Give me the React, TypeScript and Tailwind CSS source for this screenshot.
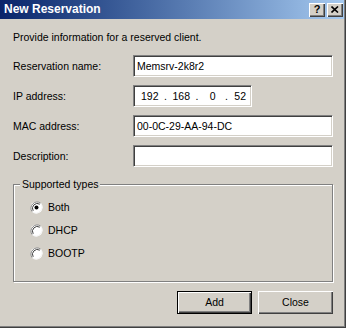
import React from "react";

const font = { fontFamily: '"Liberation Sans", Arial, sans-serif' };

function Sunken({ className = "", children }: { className?: string; children?: React.ReactNode }) {
  return (
    <div
      className={`h-[22px] bg-white border border-t-[#808080] border-l-[#808080] border-b-white border-r-white shadow-[inset_1px_1px_0_#404040,inset_-1px_-1px_0_#d4d0c8] flex items-center ${className}`}
    >
      {children}
    </div>
  );
}

function Radio({ label, checked }: { label: string; checked?: boolean }) {
  return (
    <div className="h-[23px] flex items-center gap-[5px] pl-[16px]">
      <svg width="13" height="13" viewBox="0 0 13 13">
        <circle cx="6.5" cy="6.5" r="6" fill="#fff" />
        <path d="M2.3 10.7 A6 6 0 0 1 10.7 2.3" stroke="#808080" strokeWidth="1" fill="none" />
        <path d="M3.2 9.8 A4.8 4.8 0 0 1 9.8 3.2" stroke="#404040" strokeWidth="1" fill="none" />
        <path d="M10.7 2.3 A6 6 0 0 1 2.3 10.7" stroke="#f4f4f4" strokeWidth="1" fill="none" />
        {checked && <circle cx="6.5" cy="6.5" r="2" fill="#000" />}
      </svg>
      <span>{label}</span>
    </div>
  );
}

function Button({ label, isDefault }: { label: string; isDefault?: boolean }) {
  return (
    <div
      className={`w-[75px] h-[23px] flex items-center justify-center bg-[#d4d0c8] ${
        isDefault
          ? "border border-black shadow-[inset_1px_1px_0_#fff,inset_-1px_-1px_0_#404040,inset_-2px_-2px_0_#808080]"
          : "shadow-[inset_1px_1px_0_#fff,inset_-1px_-1px_0_#404040,inset_-2px_-2px_0_#808080]"
      }`}
    >
      {label}
    </div>
  );
}

export default function App() {
  const labels = "w-[120px] shrink-0";
  return (
    <div
      className="w-[346px] h-[328px] bg-[#d4d0c8] text-black text-[10.5px] leading-[13px] border-r border-b border-[#404040] overflow-hidden"
      style={font}
    >
      <div className="h-full border-r border-b border-[#808080] flex flex-col">
        {/* Title bar */}
        <div className="h-[19px] shrink-0 flex items-center justify-between pl-[4px] pr-[1px] bg-gradient-to-r from-[#0a246a] to-[#a6caf0]">
          <span className="text-white font-bold text-[12px]">New Reservation</span>
          <div className="flex items-center gap-[2px]">
            <div className="w-[16px] h-[14px] bg-[#d4d0c8] flex items-center justify-center font-bold text-[11px] shadow-[inset_1px_1px_0_#fff,inset_-1px_-1px_0_#404040,inset_-2px_-2px_0_#808080]">
              ?
            </div>
            <div className="w-[16px] h-[14px] bg-[#d4d0c8] flex items-center justify-center shadow-[inset_1px_1px_0_#fff,inset_-1px_-1px_0_#404040,inset_-2px_-2px_0_#808080]">
              <svg width="8" height="7" viewBox="0 0 8 7">
                <path d="M0.5 0.5 L7 6.5 M7 0.5 L0.5 6.5" stroke="#000" strokeWidth="1.6" />
              </svg>
            </div>
          </div>
        </div>

        {/* Body */}
        <div className="flex-1 pl-[13px] pr-[11px] pt-[11px] border-t border-[#d4d0c8]">
          <p>Provide information for a reserved client.</p>

          <div className="mt-[11px] flex flex-col gap-[8px]">
            <div className="flex items-center">
              <span className={labels}>Reservation name:</span>
              <Sunken className="w-[200px] pl-[3px]">Memsrv-2k8r2</Sunken>
            </div>
            <div className="flex items-center">
              <span className={labels}>IP address:</span>
              <Sunken className="w-[119px] pl-[5px]">
                <span className="w-[22px] text-center">192</span>
                <span className="w-[10px] text-center">.</span>
                <span className="w-[22px] text-center">168</span>
                <span className="w-[10px] text-center">.</span>
                <span className="w-[22px] text-center">0</span>
                <span className="w-[6px] text-center">.</span>
                <span className="w-[22px] text-center">52</span>
              </Sunken>
            </div>
            <div className="flex items-center">
              <span className={labels}>MAC address:</span>
              <Sunken className="w-[200px] pl-[3px]">00-0C-29-AA-94-DC</Sunken>
            </div>
            <div className="flex items-center">
              <span className={labels}>Description:</span>
              <Sunken className="w-[200px]" />
            </div>
          </div>

          <fieldset className="mt-[11px] w-[320px] border border-[#808080] shadow-[inset_1px_1px_0_#fff,1px_1px_0_#fff] pt-[5px] pb-[16px]">
            <legend className="ml-[6px] px-[2px] bg-[#d4d0c8]">Supported types</legend>
            <Radio label="Both" checked />
            <Radio label="DHCP" />
            <Radio label="BOOTP" />
          </fieldset>

          <div className="mt-[9px] w-[320px] flex justify-end gap-[6px]">
            <Button label="Add" isDefault />
            <Button label="Close" />
          </div>
        </div>
      </div>
    </div>
  );
}
